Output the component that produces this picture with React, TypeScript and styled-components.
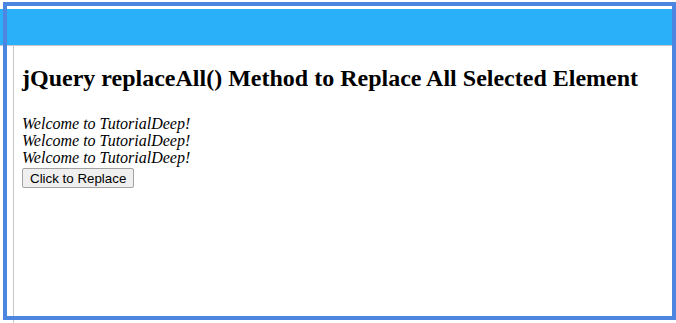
import styled, { createGlobalStyle } from 'styled-components';

const GlobalStyle = createGlobalStyle`
  html, body {
    margin: 0;
    padding: 0;
    background: #ffffff;
  }

  body {
    width: 676px;
    height: 323px;
    overflow: hidden;
    position: relative;
    font-family: "Liberation Serif", "Times New Roman", serif;
    color: #000000;
  }
`;

const Page = styled.div`
  width: 672px;
  height: 323px;
  padding-top: 9px;
  box-sizing: border-box;
  display: flex;
  flex-direction: column;
`;

const TopBar = styled.header`
  height: 36px;
  flex-shrink: 0;
  background: #29b0f8;
  border-bottom: 1px solid #c4c8cc;
`;

const Content = styled.main`
  flex: 1;
  margin-left: 13px;
  padding-left: 8px;
  border-left: 1px solid #c8c8c8;
`;

const Title = styled.h1`
  margin: 19px 0 23px;
  font-size: 24px;
  font-weight: bold;
  line-height: normal;
  white-space: nowrap;
`;

const Greeting = styled.p`
  margin: 0;
  font-style: italic;
  font-size: 16px;
  line-height: 17px;
`;

const ReplaceButton = styled.button`
  margin-top: 2px;
  padding: 2px 7px 1px;
  font-family: "Liberation Sans", Arial, sans-serif;
  font-size: 13.333px;
  line-height: 15px;
  color: #000000;
  background: #efefef;
  border: 1px solid #a3a3a3;
  border-radius: 2px;
`;

const Highlight = styled.div`
  position: absolute;
  left: 3px;
  top: 2px;
  width: 673px;
  height: 318px;
  box-sizing: border-box;
  border: 4px solid #4d86e0;
  pointer-events: none;
`;

export default function App() {
  const lines = ['Welcome to TutorialDeep!', 'Welcome to TutorialDeep!', 'Welcome to TutorialDeep!'];

  return (
    <>
      <GlobalStyle />
      <Page>
        <TopBar />
        <Content>
          <Title>jQuery replaceAll() Method to Replace All Selected Element</Title>
          {lines.map((text, i) => (
            <Greeting key={i}>{text}</Greeting>
          ))}
          <ReplaceButton type="button">Click to Replace</ReplaceButton>
        </Content>
      </Page>
      <Highlight />
    </>
  );
}
